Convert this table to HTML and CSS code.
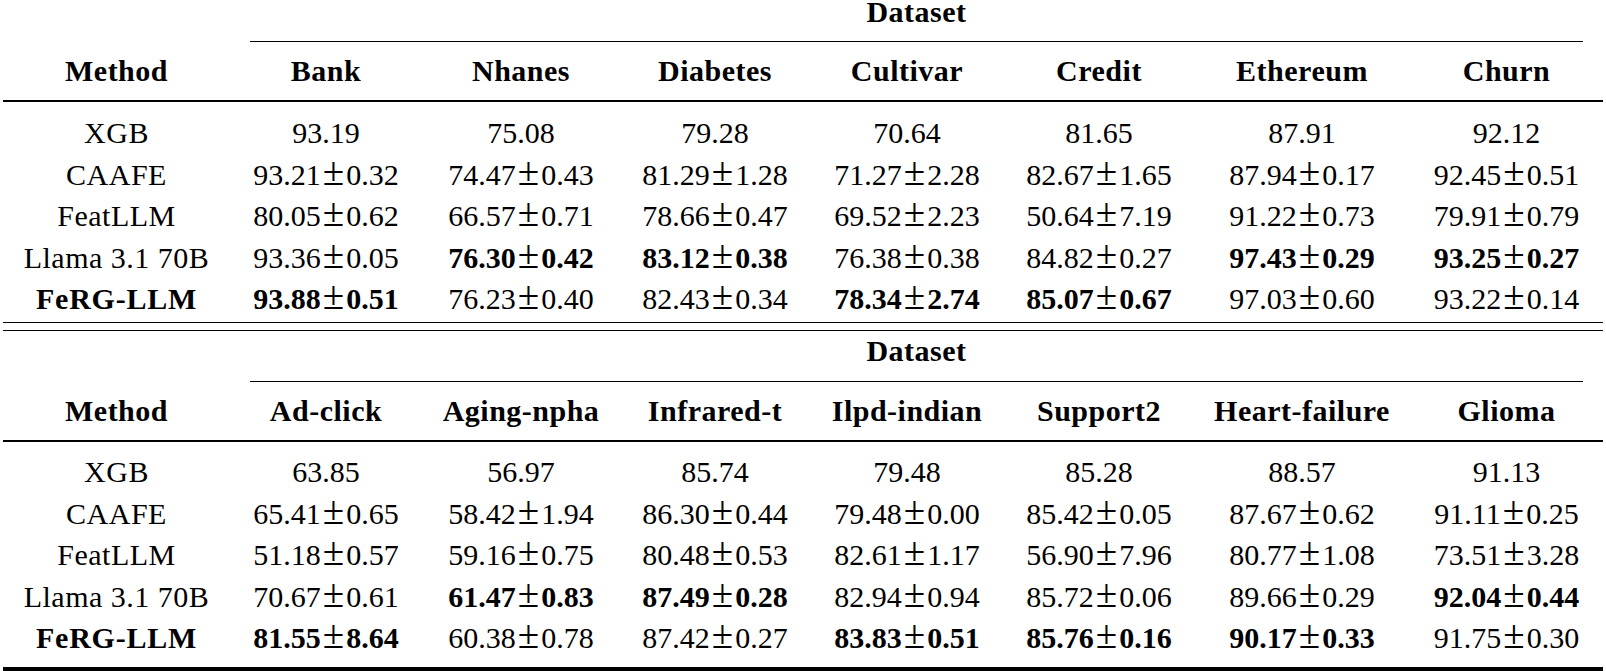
FILE: index.html
```html
<!DOCTYPE html>
<html>
<head>
<meta charset="utf-8">
<link rel="stylesheet" href="styles.css">
</head>
<body>
<div class="table">
  <div class="row super first"><div class="c"></div><div class="span">Dataset</div></div>
  <div class="cmid"></div>
  <div class="row head">
    <div class="c">Method</div><div class="c">Bank</div><div class="c">Nhanes</div><div class="c">Diabetes</div><div class="c">Cultivar</div><div class="c">Credit</div><div class="c">Ethereum</div><div class="c">Churn</div>
  </div>
  <div class="mid"></div>
  <div class="body">
    <div class="row data">
      <div class="c m">XGB</div><div class="c">93.19</div><div class="c">75.08</div><div class="c">79.28</div><div class="c">70.64</div><div class="c">81.65</div><div class="c">87.91</div><div class="c">92.12</div>
    </div>
    <div class="row data">
      <div class="c m">CAAFE</div><div class="c">93.21<span class="pm">±</span>0.32</div><div class="c">74.47<span class="pm">±</span>0.43</div><div class="c">81.29<span class="pm">±</span>1.28</div><div class="c">71.27<span class="pm">±</span>2.28</div><div class="c">82.67<span class="pm">±</span>1.65</div><div class="c">87.94<span class="pm">±</span>0.17</div><div class="c">92.45<span class="pm">±</span>0.51</div>
    </div>
    <div class="row data">
      <div class="c m">FeatLLM</div><div class="c">80.05<span class="pm">±</span>0.62</div><div class="c">66.57<span class="pm">±</span>0.71</div><div class="c">78.66<span class="pm">±</span>0.47</div><div class="c">69.52<span class="pm">±</span>2.23</div><div class="c">50.64<span class="pm">±</span>7.19</div><div class="c">91.22<span class="pm">±</span>0.73</div><div class="c">79.91<span class="pm">±</span>0.79</div>
    </div>
    <div class="row data">
      <div class="c m">Llama 3.1 70B</div><div class="c">93.36<span class="pm">±</span>0.05</div><div class="c b">76.30<span class="pm">±</span>0.42</div><div class="c b">83.12<span class="pm">±</span>0.38</div><div class="c">76.38<span class="pm">±</span>0.38</div><div class="c">84.82<span class="pm">±</span>0.27</div><div class="c b">97.43<span class="pm">±</span>0.29</div><div class="c b">93.25<span class="pm">±</span>0.27</div>
    </div>
    <div class="row data">
      <div class="c m b">FeRG-LLM</div><div class="c b">93.88<span class="pm">±</span>0.51</div><div class="c">76.23<span class="pm">±</span>0.40</div><div class="c">82.43<span class="pm">±</span>0.34</div><div class="c b">78.34<span class="pm">±</span>2.74</div><div class="c b">85.07<span class="pm">±</span>0.67</div><div class="c">97.03<span class="pm">±</span>0.60</div><div class="c">93.22<span class="pm">±</span>0.14</div>
    </div>
  </div>
  <div class="dbl-a"></div>
  <div class="dbl-b"></div>

  <div class="row super second"><div class="c"></div><div class="span">Dataset</div></div>
  <div class="cmid"></div>
  <div class="row head">
    <div class="c">Method</div><div class="c">Ad-click</div><div class="c">Aging-npha</div><div class="c">Infrared-t</div><div class="c">Ilpd-indian</div><div class="c">Support2</div><div class="c">Heart-failure</div><div class="c">Glioma</div>
  </div>
  <div class="mid"></div>
  <div class="body lower">
    <div class="row data">
      <div class="c m">XGB</div><div class="c">63.85</div><div class="c">56.97</div><div class="c">85.74</div><div class="c">79.48</div><div class="c">85.28</div><div class="c">88.57</div><div class="c">91.13</div>
    </div>
    <div class="row data">
      <div class="c m">CAAFE</div><div class="c">65.41<span class="pm">±</span>0.65</div><div class="c">58.42<span class="pm">±</span>1.94</div><div class="c">86.30<span class="pm">±</span>0.44</div><div class="c">79.48<span class="pm">±</span>0.00</div><div class="c">85.42<span class="pm">±</span>0.05</div><div class="c">87.67<span class="pm">±</span>0.62</div><div class="c">91.11<span class="pm">±</span>0.25</div>
    </div>
    <div class="row data">
      <div class="c m">FeatLLM</div><div class="c">51.18<span class="pm">±</span>0.57</div><div class="c">59.16<span class="pm">±</span>0.75</div><div class="c">80.48<span class="pm">±</span>0.53</div><div class="c">82.61<span class="pm">±</span>1.17</div><div class="c">56.90<span class="pm">±</span>7.96</div><div class="c">80.77<span class="pm">±</span>1.08</div><div class="c">73.51<span class="pm">±</span>3.28</div>
    </div>
    <div class="row data">
      <div class="c m">Llama 3.1 70B</div><div class="c">70.67<span class="pm">±</span>0.61</div><div class="c b">61.47<span class="pm">±</span>0.83</div><div class="c b">87.49<span class="pm">±</span>0.28</div><div class="c">82.94<span class="pm">±</span>0.94</div><div class="c">85.72<span class="pm">±</span>0.06</div><div class="c">89.66<span class="pm">±</span>0.29</div><div class="c b">92.04<span class="pm">±</span>0.44</div>
    </div>
    <div class="row data">
      <div class="c m b">FeRG-LLM</div><div class="c b">81.55<span class="pm">±</span>8.64</div><div class="c">60.38<span class="pm">±</span>0.78</div><div class="c">87.42<span class="pm">±</span>0.27</div><div class="c b">83.83<span class="pm">±</span>0.51</div><div class="c b">85.76<span class="pm">±</span>0.16</div><div class="c b">90.17<span class="pm">±</span>0.33</div><div class="c">91.75<span class="pm">±</span>0.30</div>
    </div>
  </div>
  <div class="bottom"></div>
</div>
</body>
</html>
```

FILE: styles.css
```css
html, body {
  margin: 0;
  padding: 0;
  background: #ffffff;
}

body {
  font-family: "Liberation Serif", "Times New Roman", serif;
  font-size: 30px;
  color: #000000;
  overflow: hidden;
}

.table {
  width: 1600px;
  margin-left: 3px;
}

.row {
  display: grid;
  grid-template-columns: 227px 192px 198px 190px 194px 190px 216px 193px;
  white-space: nowrap;
}

.c {
  text-align: center;
}

.m {
  letter-spacing: 0.5px;
}

.b {
  font-weight: bold;
}

.b.m {
  letter-spacing: 0.75px;
}

.pm {
  font-weight: normal;
  font-size: 1.3em;
  line-height: 0;
  margin: 0 2px;
  letter-spacing: 0;
}

.super {
  line-height: 22px;
  font-weight: bold;
  letter-spacing: 0.5px;
  padding-bottom: 18px;
}

.super.first {
  padding-top: 1px;
}

.super.second {
  padding-top: 9px;
  padding-bottom: 19px;
}

.super .span {
  grid-column: 2 / -1;
  text-align: center;
}

.cmid {
  height: 1px;
  background: #000;
  margin-left: 247px;
  margin-right: 20px;
}

.head {
  line-height: 34px;
  font-weight: bold;
  letter-spacing: 0.5px;
  padding: 12px 0 12px;
}

.mid {
  height: 2px;
  background: #000;
}

.body {
  padding-top: 10px;
  padding-bottom: 2.5px;
}

.body.lower {
  padding-top: 9px;
  padding-bottom: 8.5px;
}

.data {
  line-height: 41.5px;
}

.dbl-a {
  height: 1px;
  background: #000;
}

.dbl-b {
  height: 1px;
  background: #000;
  margin-top: 7px;
}

.bottom {
  height: 4px;
  background: #000;
}
```
